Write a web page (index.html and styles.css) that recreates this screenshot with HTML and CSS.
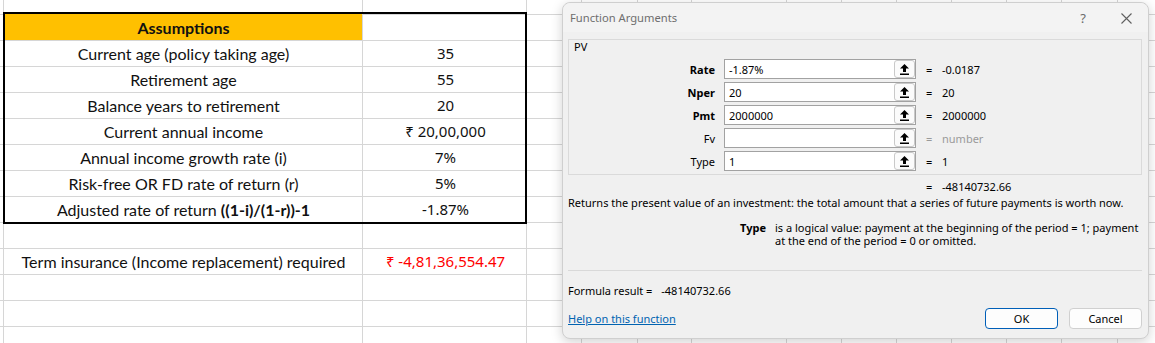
FILE: index.html
```html
<!DOCTYPE html>
<html lang="en">
<head>
  <meta charset="UTF-8" />
  <meta name="viewport" content="width=device-width, initial-scale=1.0" />
  <title>Term Insurance - PV</title>
  <link rel="stylesheet" href="styles.css">
</head>
<body>

  <div class="sheet">
    <table class="assume">
      <colgroup><col class="col-b"><col class="col-c"></colgroup>
      <tr><th class="head">Assumptions</th><th></th></tr>
      <tr><td class="label">Current age (policy taking age)</td><td class="val">35</td></tr>
      <tr><td class="label">Retirement age</td><td class="val">55</td></tr>
      <tr><td class="label">Balance years to retirement</td><td class="val">20</td></tr>
      <tr><td class="label">Current annual income</td><td class="val">₹ 20,00,000</td></tr>
      <tr><td class="label">Annual income growth rate (i)</td><td class="val">7%</td></tr>
      <tr><td class="label">Risk-free OR FD rate of return (r)</td><td class="val">5%</td></tr>
      <tr><td class="label">Adjusted rate of return <b>((1-i)/(1-r))-1</b></td><td class="val">-1.87%</td></tr>
    </table>

    <table class="result">
      <colgroup><col class="col-b"><col class="col-c"></colgroup>
      <tr><td class="label">Term insurance (Income replacement) required</td><td class="val neg">₹ -4,81,36,554.47</td></tr>
    </table>

    <div class="dialog">
      <div class="title-bar">
        <span class="title">Function Arguments</span>
        <span class="help-btn">?</span>
        <span class="close-btn">
          <svg width="11" height="11" viewBox="0 0 11 11"><path d="M0.5 0.5 L10.5 10.5 M10.5 0.5 L0.5 10.5" stroke="#5f5f5f" stroke-width="1.1" fill="none"/></svg>
        </span>
      </div>

      <div class="dialog-body">
        <div class="group">
          <div class="group-name">PV</div>

          <div class="arg-row">
            <span class="arg-label req">Rate</span>
            <div class="arg-input"><span>-1.87%</span><span class="ref-btn"><svg width="9" height="11" viewBox="0 0 9 11"><path d="M4.5 0 L9 4.5 L6 4.5 L6 8 L3 8 L3 4.5 L0 4.5 Z M0 9.5 H9 V11 H0 Z" fill="#000"/></svg></span></div>
            <span class="eq">=</span>
            <span class="arg-val">-0.0187</span>
          </div>

          <div class="arg-row">
            <span class="arg-label req">Nper</span>
            <div class="arg-input"><span>20</span><span class="ref-btn"><svg width="9" height="11" viewBox="0 0 9 11"><path d="M4.5 0 L9 4.5 L6 4.5 L6 8 L3 8 L3 4.5 L0 4.5 Z M0 9.5 H9 V11 H0 Z" fill="#000"/></svg></span></div>
            <span class="eq">=</span>
            <span class="arg-val">20</span>
          </div>

          <div class="arg-row">
            <span class="arg-label req">Pmt</span>
            <div class="arg-input"><span>2000000</span><span class="ref-btn"><svg width="9" height="11" viewBox="0 0 9 11"><path d="M4.5 0 L9 4.5 L6 4.5 L6 8 L3 8 L3 4.5 L0 4.5 Z M0 9.5 H9 V11 H0 Z" fill="#000"/></svg></span></div>
            <span class="eq">=</span>
            <span class="arg-val">2000000</span>
          </div>

          <div class="arg-row">
            <span class="arg-label">Fv</span>
            <div class="arg-input"><span></span><span class="ref-btn"><svg width="9" height="11" viewBox="0 0 9 11"><path d="M4.5 0 L9 4.5 L6 4.5 L6 8 L3 8 L3 4.5 L0 4.5 Z M0 9.5 H9 V11 H0 Z" fill="#000"/></svg></span></div>
            <span class="eq muted">=</span>
            <span class="arg-val muted">number</span>
          </div>

          <div class="arg-row">
            <span class="arg-label">Type</span>
            <div class="arg-input"><span>1</span><span class="ref-btn"><svg width="9" height="11" viewBox="0 0 9 11"><path d="M4.5 0 L9 4.5 L6 4.5 L6 8 L3 8 L3 4.5 L0 4.5 Z M0 9.5 H9 V11 H0 Z" fill="#000"/></svg></span></div>
            <span class="eq">=</span>
            <span class="arg-val">1</span>
          </div>
        </div>

        <div class="total"><span class="total-eq">=</span><span>-48140732.66</span></div>

        <p class="desc">Returns the present value of an investment: the total amount that a series of future payments is worth now.</p>

        <div class="arg-help">
          <b>Type</b>
          <p>is a logical value: payment at the beginning of the period = 1; payment<br>at the end of the period = 0 or omitted.</p>
        </div>

        <hr class="sep">

        <div class="formula">Formula result = <span>-48140732.66</span></div>

        <div class="footer">
          <a href="#" class="help-link">Help on this function</a>
          <button class="btn ok">OK</button>
          <button class="btn">Cancel</button>
        </div>
      </div>
    </div>
  </div>

</body>
</html>
```

FILE: styles.css
```css
* {
  margin: 0;
  padding: 0;
  box-sizing: border-box;
}

body {
  background: #ffffff;
  overflow: hidden;
}

/* worksheet with its gridlines */
.sheet {
  position: relative;
  height: 343px;
  padding-top: 12px;
  padding-left: 3px;
  overflow: hidden;
  background-color: #ffffff;
  background-image:
    linear-gradient(to right,
      transparent 3px, #d6d6d6 3px, #d6d6d6 4px, transparent 4px,
      transparent 362px, #d6d6d6 362px, #d6d6d6 363px, transparent 363px,
      transparent 526px, #d6d6d6 526px, #d6d6d6 527px, transparent 527px,
      transparent 581px, #d6d6d6 581px, #d6d6d6 582px, transparent 582px,
      transparent 637px, #d6d6d6 637px, #d6d6d6 638px, transparent 638px,
      transparent 691px, #d6d6d6 691px, #d6d6d6 692px, transparent 692px,
      transparent 786px, #d6d6d6 786px, #d6d6d6 787px, transparent 787px,
      transparent 841px, #d6d6d6 841px, #d6d6d6 842px, transparent 842px,
      transparent 896px, #d6d6d6 896px, #d6d6d6 897px, transparent 897px,
      transparent 951px, #d6d6d6 951px, #d6d6d6 952px, transparent 952px,
      transparent 1006px, #d6d6d6 1006px, #d6d6d6 1007px, transparent 1007px,
      transparent 1061px, #d6d6d6 1061px, #d6d6d6 1062px, transparent 1062px,
      transparent 1117px, #d6d6d6 1117px, #d6d6d6 1118px, transparent 1118px),
    linear-gradient(#d6d6d6 1px, transparent 1px);
  background-size: 100% 100%, 100% 26px;
  background-position: 0 0, 0 14px;
  background-repeat: no-repeat, repeat;
}

.assume,
.result {
  width: 524px;
  border-collapse: separate;
  border-spacing: 0;
  table-layout: fixed;
}

.assume {
  border: 2px solid #000000;
}

.result {
  border: 2px solid transparent;
  margin-top: 22px;
}

.col-b {
  width: 357px;
}

.col-c {
  width: 163px;
}

.assume th,
.assume td,
.result td {
  height: 26px;
  padding: 0 4px;
  text-align: center;
  vertical-align: middle;
  white-space: nowrap;
}

.head {
  background-color: #ffc000;
  font-family: Lato, "Liberation Sans", sans-serif;
  font-size: 16px;
  font-weight: 700;
  color: #111111;
}

.label {
  font-family: Lato, "Liberation Sans", sans-serif;
  font-size: 16px;
  color: #111111;
}

.val {
  font-family: "Noto Sans", "DejaVu Sans", sans-serif;
  font-size: 15px;
  color: #111111;
  padding-left: 8px !important;
}

.neg {
  color: #ff0000;
}

/* Function Arguments dialog floating over the sheet */
.dialog {
  position: absolute;
  left: 562px;
  top: 2px;
  width: 587px;
  height: 337px;
  background: #f0f0f0;
  border: 1px solid #cfcfcf;
  border-radius: 8px;
  box-shadow: 0 3px 12px rgba(0, 0, 0, 0.18);
  font-family: "Noto Sans", "DejaVu Sans", sans-serif;
  font-size: 11px;
  color: #000000;
}

.title-bar {
  display: flex;
  align-items: center;
  height: 29px;
  padding: 0 16px 0 7px;
  background: #f3f3f3;
  border-radius: 8px 8px 0 0;
}

.title {
  flex: 1;
  font-size: 11.2px;
  color: #6e6e6e;
}

.help-btn {
  font-size: 13px;
  color: #6a6a6a;
  margin-right: 35px;
}

.close-btn {
  display: flex;
  margin-top: 1px;
}

.dialog-body {
  padding: 7px 6px 0 5px;
}

.group {
  height: 136px;
  border: 1px solid #dadada;
}

.group-name {
  height: 19px;
  padding: 1px 0 0 5px;
  line-height: 12px;
}

.arg-row {
  display: grid;
  grid-template-columns: 155px 192px 26px auto;
  align-items: center;
  height: 20px;
  margin-bottom: 3px;
}

.arg-label {
  text-align: right;
  padding-right: 9px;
}

.req {
  font-weight: 700;
}

.arg-input {
  display: flex;
  align-items: center;
  justify-content: space-between;
  height: 20px;
  background: #ffffff;
  border: 1px solid #a2a2a2;
  padding-left: 4px;
}

.ref-btn {
  display: flex;
  align-items: center;
  justify-content: center;
  width: 21px;
  height: 18px;
  background: #fbfbfb;
  border: 1px solid #c9c9c9;
  border-radius: 3px;
}

.eq {
  padding-left: 10px;
}

.muted {
  color: #9a9a9a;
}

.total {
  display: flex;
  padding-left: 358px;
  margin-top: 5px;
  line-height: 13px;
}

.total-eq {
  width: 16px;
}

.desc {
  margin-top: 3px;
  line-height: 13px;
}

.arg-help {
  display: grid;
  grid-template-columns: 207px 1fr;
  margin-top: 12px;
  line-height: 13px;
}

.arg-help b {
  text-align: right;
  padding-right: 9px;
}

.sep {
  border: none;
  border-top: 1px solid #d9d9d9;
  margin-top: 23px;
}

.formula {
  margin-top: 13px;
  line-height: 13px;
}

.formula span {
  margin-left: 6px;
}

.footer {
  display: flex;
  align-items: center;
  margin-top: 11px;
}

.help-link {
  flex: 1;
  color: #0063b1;
  text-decoration: underline;
}

.btn {
  width: 73px;
  height: 21px;
  margin-left: 11px;
  background: #fdfdfd;
  border: 1px solid #d0d0d0;
  border-radius: 4px;
  font-family: "Noto Sans", "DejaVu Sans", sans-serif;
  font-size: 11px;
  color: #000000;
}

.ok {
  border-color: #005fb8;
}
```
